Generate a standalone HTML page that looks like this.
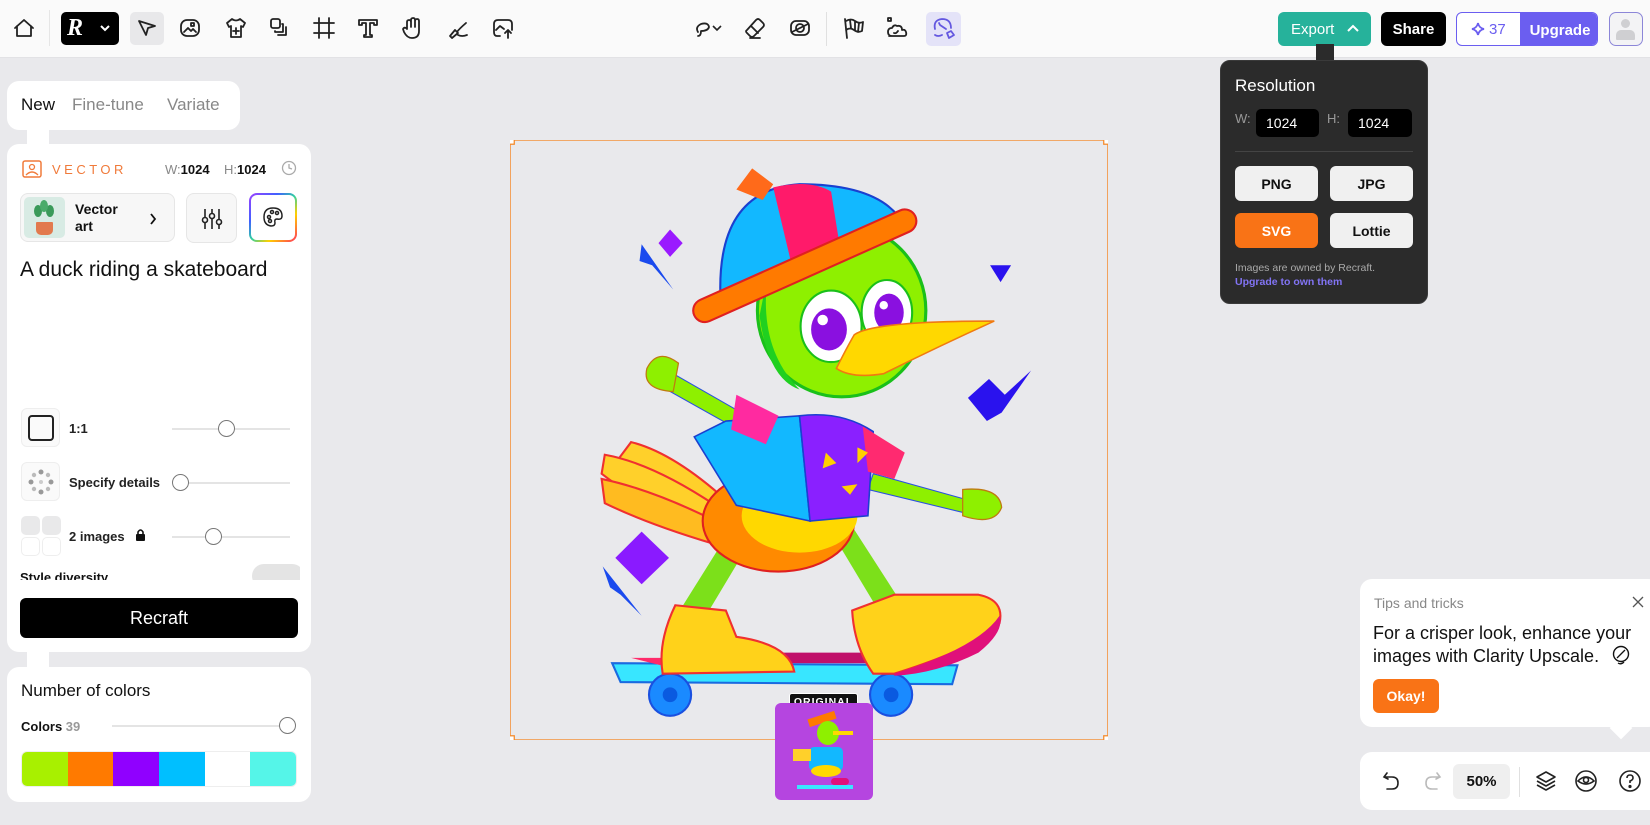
<!DOCTYPE html>
<html><head><meta charset="utf-8">
<style>
*{box-sizing:border-box;margin:0;padding:0}
body{width:1650px;height:825px;overflow:hidden;background:#e9e9ec;font-family:"Liberation Sans",sans-serif;position:relative;color:#111}
.abs{position:absolute}
#top{left:0;top:0;width:1650px;height:58px;background:#fafafa;border-bottom:1px solid #e2e2e5}
.ic{position:absolute;top:15px;width:26px;height:26px}
.ic svg{width:26px;height:26px;fill:none;stroke:#222;stroke-width:1.8;stroke-linecap:round;stroke-linejoin:round}
.panel{position:absolute;background:#fff;border-radius:12px}
.lbl{position:absolute;font-size:13px;font-weight:bold;color:#222}
.track{position:absolute;height:2px;background:#e4e4e4}
.knob{position:absolute;width:17px;height:17px;border-radius:50%;border:1.5px solid #777;background:#fff}
.btn{position:absolute;border-radius:6px;display:flex;align-items:center;justify-content:center;font-weight:bold}
</style></head><body>

<div id="top" class="abs">
  <div class="ic" style="left:11px"><svg viewBox="0 0 26 26"><path d="M4 13 L13 5 L22 13 M6 11 V21 H20 V11"/></svg></div>
  <div class="abs" style="left:49px;top:10px;width:1px;height:36px;background:#e6e6e6"></div>
  <div class="abs" style="left:61px;top:12px;width:58px;height:33px;background:#000;border-radius:5px">
    <span class="abs" style="left:6px;top:3px;color:#fff;font:italic bold 24px 'Liberation Serif',serif">R</span>
    <svg class="abs" style="left:38px;top:11px" width="12" height="10" viewBox="0 0 12 10"><path d="M2 3 L6 7 L10 3" stroke="#fff" stroke-width="2" fill="none"/></svg>
  </div>
  <div class="abs" style="left:130px;top:12px;width:34px;height:33px;background:#e8e8ea;border-radius:5px"></div>
  <div class="ic" style="left:134px"><svg viewBox="0 0 26 26"><path d="M5 6 L21 11 L14 13 L12 20 Z"/></svg></div>
  <div class="ic" style="left:177px"><svg viewBox="0 0 26 26"><rect x="4" y="5" width="18" height="16" rx="6"/><path d="M7 17 L11 13 L14 16 L16 14 L19 17"/><rect x="14" y="8" width="3" height="3"/></svg></div>
  <div class="ic" style="left:223px"><svg viewBox="0 0 26 26"><path d="M9 4 L4 8 L6 12 L8 11 V22 H18 V11 L20 12 L22 8 L17 4 Q13 7 9 4 Z M13 13 V19 M10 16 H16"/></svg></div>
  <div class="ic" style="left:267px"><svg viewBox="0 0 26 26"><rect x="4" y="4" width="9" height="9" rx="2"/><path d="M8 16 V17 H16 V9 H15 M11 20 H19 V12"/></svg></div>
  <div class="ic" style="left:311px"><svg viewBox="0 0 26 26"><path d="M8 3 V23 M18 3 V23 M3 8 H23 M3 18 H23"/></svg></div>
  <div class="ic" style="left:355px"><svg viewBox="0 0 26 26"><path d="M4 5 H22 V10 H19 V8 H15 V20 H17 V22 H9 V20 H11 V8 H7 V10 H4 Z"/></svg></div>
  <div class="ic" style="left:399px"><svg viewBox="0 0 26 26"><path d="M8 14 V7 Q8 5 10 5 Q12 5 12 7 V12 V5 Q12 3 14 3 Q16 3 16 5 V12 V6 Q16 4 18 4 Q20 4 20 6 V16 Q20 23 13 23 Q8 23 5 17 L4 14 Q5 12 7 13 Z"/></svg></div>
  <div class="ic" style="left:445px"><svg viewBox="0 0 26 26"><path d="M21 8 Q14 14 12 17 M5 21 L10 15 L13 18 L7 23 Z M13 20 Q17 22 22 20"/></svg></div>
  <div class="ic" style="left:490px"><svg viewBox="0 0 26 26"><path d="M10 21 H7 Q4 21 4 17 V9 Q4 5 8 5 H18 Q22 5 22 9 V15 M6 15 L10 11 L14 14 M18 23 V15 M15 18 L18 15 L21 18"/></svg></div>

  <div class="ic" style="left:692px"><svg viewBox="0 0 26 26"><path d="M6 17 Q3 12 9 9 Q16 7 17 12 Q16 16 9 16 M9 16 Q9 21 6 21"/></svg></div>
  <svg class="abs" style="left:712px;top:24px" width="10" height="8"><path d="M1 2 L5 6 L9 2" stroke="#222" stroke-width="1.6" fill="none"/></svg>
  <div class="ic" style="left:742px"><svg viewBox="0 0 26 26"><path d="M5 15 L14 5 Q16 3 18 5 L21 8 Q23 10 21 12 L12 21 Q10 23 8 21 L5 18 Q3 16 5 15 Z M9 11 L16 18 M8 23 H18"/></svg></div>
  <div class="ic" style="left:787px"><svg viewBox="0 0 26 26"><rect x="4" y="6" width="18" height="14" rx="5"/><circle cx="13" cy="13" r="4"/><path d="M5 17 L21 9"/></svg></div>
  <div class="abs" style="left:826px;top:12px;width:1px;height:34px;background:#e0e0e0"></div>
  <div class="ic" style="left:841px"><svg viewBox="0 0 26 26"><path d="M6 23 L4 4 M5 6 Q10 3 14 6 Q18 9 22 7 L21 16 Q17 18 13 15 Q9 12 5 15 M9 5 L10 13 M14 7 L14 15 M18 8 L17 17"/></svg></div>
  <div class="ic" style="left:883px"><svg viewBox="0 0 26 26"><rect x="5" y="3" width="3" height="3"/><path d="M6 21 H21 Q24 21 23 17 Q22 14 19 15 Q19 10 14 11 Q11 9 9 13 Q5 13 5 17 Q5 21 9 21 M11 18 Q13 19 15 16"/></svg></div>
  <div class="abs" style="left:926px;top:12px;width:35px;height:34px;background:#e4e3f8;border-radius:5px"></div>
  <div class="ic" style="left:930px"><svg viewBox="0 0 26 26" style="stroke:#6458e0"><path d="M5 14 Q3 5 12 4 Q21 4 21 13 M9 8 L10 10 M16 14 L10 10 M5 20 Q8 22 12 20 M17 18 L21 16 L24 20 L19 23 Z"/></svg></div>

  <div class="btn" style="left:1278px;top:12px;width:93px;height:34px;background:#26b29b;color:#fff;font-size:15px;font-weight:normal;justify-content:flex-start;padding-left:13px">Export
    <svg class="abs" style="left:69px;top:12px" width="12" height="9"><path d="M1 7 L6 2 L11 7" stroke="#fff" stroke-width="2" fill="none"/></svg></div>
  <div class="btn" style="left:1381px;top:12px;width:65px;height:34px;background:#000;color:#fff;font-size:15px">Share</div>
  <div class="abs" style="left:1456px;top:12px;width:142px;height:34px;border:1.5px solid #6b5ef0;border-radius:6px;background:#fff;overflow:hidden">
    <svg class="abs" style="left:14px;top:9px" width="14" height="14"><path d="M7 1 Q8 6 13 7 Q8 8 7 13 Q6 8 1 7 Q6 6 7 1 Z" stroke="#6b5ef0" stroke-width="1.8" fill="none"/></svg>
    <span class="abs" style="left:32px;top:8px;color:#6b5ef0;font-size:15px">37</span>
    <div class="abs" style="left:63px;top:0;width:80px;height:34px;background:#6b5ef0;color:#fff;font-size:15px;font-weight:bold;display:flex;align-items:center;justify-content:center">Upgrade</div>
  </div>
  <div class="abs" style="left:1609px;top:12px;width:34px;height:34px;border:1.5px solid #8c86d8;border-radius:7px;background:#f3f3f5">
    <div class="abs" style="left:11px;top:6px;width:9px;height:9px;border-radius:50%;background:#cfcfd2"></div>
    <div class="abs" style="left:6px;top:17px;width:19px;height:10px;border-radius:5px 5px 1px 1px;background:#cfcfd2"></div>
  </div>
</div>

<!-- Export dropdown -->
<div class="abs" style="left:1316px;top:44px;width:18px;height:18px;background:#2b2b2b"></div>
<div class="abs" style="left:1220px;top:60px;width:208px;height:244px;background:#2b2b2b;border-radius:10px;border:1px solid #3a3a3a">
  <div class="abs" style="left:14px;top:15px;color:#fff;font-size:17px">Resolution</div>
  <div class="abs" style="left:14px;top:50px;color:#999;font-size:13px">W:</div>
  <div class="abs" style="left:35px;top:48px;width:63px;height:28px;background:#000;border-radius:5px;color:#fff;font-size:14px;padding:6px 0 0 10px">1024</div>
  <div class="abs" style="left:106px;top:50px;color:#999;font-size:13px">H:</div>
  <div class="abs" style="left:127px;top:48px;width:64px;height:28px;background:#000;border-radius:5px;color:#fff;font-size:14px;padding:6px 0 0 10px">1024</div>
  <div class="abs" style="left:14px;top:90px;width:178px;height:1px;background:#444"></div>
  <div class="btn" style="left:14px;top:105px;width:83px;height:35px;background:#f0f0f0;font-size:14px">PNG</div>
  <div class="btn" style="left:109px;top:105px;width:83px;height:35px;background:#f0f0f0;font-size:14px">JPG</div>
  <div class="btn" style="left:14px;top:152px;width:83px;height:35px;background:#f97316;color:#fff;font-size:14px">SVG</div>
  <div class="btn" style="left:109px;top:152px;width:83px;height:35px;background:#f0f0f0;font-size:14px">Lottie</div>
  <div class="abs" style="left:14px;top:201px;color:#aaa;font-size:10.5px">Images are owned by Recraft.</div>
  <div class="abs" style="left:14px;top:215px;color:#8274f5;font-size:10.5px;font-weight:bold">Upgrade to own them</div>
</div>

<!-- Left panels -->
<div class="panel" style="left:7px;top:81px;width:233px;height:49px"></div>
<div class="abs" style="left:27px;top:128px;width:22px;height:18px;background:#fff"></div>
<div class="abs" style="left:21px;top:95px;font-size:17px;color:#111">New</div>
<div class="abs" style="left:72px;top:95px;font-size:17px;color:#888">Fine-tune</div>
<div class="abs" style="left:167px;top:95px;font-size:17px;color:#888">Variate</div>

<div class="panel" style="left:7px;top:144px;width:304px;height:508px;overflow:hidden">
  <svg class="abs" style="left:14px;top:15px" width="22" height="20" viewBox="0 0 22 20"><rect x="2" y="2" width="18" height="16" rx="2" stroke="#f07a3a" stroke-width="1.5" fill="none"/><circle cx="11" cy="8" r="2.5" stroke="#f07a3a" stroke-width="1.3" fill="none"/><path d="M5 16 Q11 10 17 16" stroke="#f07a3a" stroke-width="1.3" fill="none"/></svg>
  <div class="abs" style="left:45px;top:18px;color:#f07a3a;font-size:13px;letter-spacing:3.5px">VECTOR</div>
  <div class="abs" style="left:158px;top:18px;font-size:13px;color:#888">W:<b style="color:#111">1024</b></div>
  <div class="abs" style="left:217px;top:18px;font-size:13px;color:#888">H:<b style="color:#111">1024</b></div>
  <svg class="abs" style="left:274px;top:16px" width="16" height="16"><circle cx="8" cy="8" r="6.5" stroke="#aaa" stroke-width="1.3" fill="none"/><path d="M8 4 V8 L11 9" stroke="#aaa" stroke-width="1.3" fill="none"/></svg>
  <div class="abs" style="left:13px;top:49px;width:155px;height:49px;border:1px solid #e6e6e6;border-radius:8px;background:#f7f7f7">
    <div class="abs" style="left:3px;top:3px;width:41px;height:41px;background:#d8ebe4;border-radius:5px">
      <div class="abs" style="left:12px;top:25px;width:17px;height:13px;background:#e27a4e;border-radius:1px 1px 5px 5px"></div>
      <div class="abs" style="left:10px;top:8px;width:8px;height:12px;background:#3a9a5a;border-radius:50%"></div>
      <div class="abs" style="left:22px;top:8px;width:8px;height:12px;background:#3a9a5a;border-radius:50%"></div>
      <div class="abs" style="left:16px;top:3px;width:8px;height:12px;background:#4aab6a;border-radius:50%"></div>
    </div>
    <div class="abs" style="left:54px;top:7px;font-size:14px;font-weight:bold;line-height:17px">Vector<br>art</div>
    <svg class="abs" style="left:128px;top:19px" width="8" height="12"><path d="M2 1 L6 6 L2 11" stroke="#111" stroke-width="1.8" fill="none"/></svg>
  </div>
  <div class="abs" style="left:179px;top:49px;width:51px;height:50px;border:1px solid #e6e6e6;border-radius:8px;background:#f7f7f7">
    <svg class="abs" style="left:14px;top:13px" width="22" height="24" viewBox="0 0 22 24" fill="none" stroke="#222" stroke-width="1.6"><path d="M4 2 V10 M4 16 V22 M11 2 V6 M11 12 V22 M18 2 V12 M18 18 V22"/><circle cx="4" cy="13" r="2.5"/><circle cx="11" cy="9" r="2.5"/><circle cx="18" cy="15" r="2.5"/></svg>
  </div>
  <div class="abs" style="left:242px;top:49px;width:48px;height:49px;border-radius:8px;padding:2px;background:linear-gradient(135deg,#a040ff,#4060ff 30%,#30d0a0 50%,#ffd000 70%,#ff3060)">
    <div style="width:100%;height:100%;background:#fff;border-radius:6px;position:relative">
      <svg class="abs" style="left:11px;top:11px" width="22" height="22" viewBox="0 0 22 22" fill="none" stroke="#222" stroke-width="1.5"><path d="M11 2 Q20 2 20 10 Q20 14 15 13 Q12 13 13 17 Q13 20 9 20 Q2 19 2 11 Q2 2 11 2 Z"/><circle cx="7" cy="11" r="1.5"/><circle cx="10" cy="6" r="1.5"/><circle cx="15" cy="7" r="1.5"/><circle cx="8" cy="15" r="1.5"/></svg>
    </div>
  </div>
  <div class="abs" style="left:13px;top:114px;font-size:21px;color:#111">A duck riding a skateboard</div>

  <div class="abs" style="left:14px;top:264px;width:39px;height:39px;border:1px solid #eee;border-radius:6px;background:#fafafa">
    <div class="abs" style="left:6px;top:6px;width:26px;height:26px;border:2px solid #222;border-radius:4px"></div>
  </div>
  <div class="lbl" style="left:62px;top:277px">1:1</div>
  <div class="track" style="left:165px;top:284px;width:118px"></div>
  <div class="knob" style="left:211px;top:276px"></div>

  <div class="abs" style="left:14px;top:318px;width:39px;height:39px;border:1px solid #eee;border-radius:6px;background:#fafafa">
    <svg class="abs" style="left:5px;top:5px" width="28" height="28" viewBox="0 0 28 28" fill="#999"><circle cx="14" cy="4" r="2.5"/><circle cx="14" cy="24" r="2.5"/><circle cx="4" cy="14" r="2.5"/><circle cx="24" cy="14" r="2.5"/><circle cx="7" cy="7" r="2.2" fill="#bbb"/><circle cx="21" cy="7" r="2.2" fill="#bbb"/><circle cx="7" cy="21" r="2.2" fill="#bbb"/><circle cx="21" cy="21" r="2.2" fill="#bbb"/><circle cx="14" cy="14" r="2" fill="#ccc"/></svg>
  </div>
  <div class="lbl" style="left:62px;top:331px">Specify details</div>
  <div class="track" style="left:175px;top:338px;width:108px"></div>
  <div class="knob" style="left:165px;top:330px"></div>

  <div class="abs" style="left:14px;top:372px;width:19px;height:19px;background:#e9e9ea;border-radius:5px"></div>
  <div class="abs" style="left:35px;top:372px;width:19px;height:19px;background:#e9e9ea;border-radius:5px"></div>
  <div class="abs" style="left:14px;top:393px;width:19px;height:19px;border:1px solid #eee;border-radius:5px"></div>
  <div class="abs" style="left:35px;top:393px;width:19px;height:19px;border:1px solid #eee;border-radius:5px"></div>
  <div class="lbl" style="left:62px;top:385px">2 images</div>
  <svg class="abs" style="left:128px;top:384px" width="11" height="14"><rect x="1" y="6" width="9" height="7" rx="1" fill="#111"/><path d="M3 6 V4 Q5.5 0 8 4 V6" stroke="#111" stroke-width="1.6" fill="none"/></svg>
  <div class="track" style="left:165px;top:392px;width:118px"></div>
  <div class="knob" style="left:198px;top:384px"></div>

  <div class="abs" style="left:13px;top:402px;width:280px;height:34px;overflow:hidden"><div class="abs" style="left:0;top:24px;font-size:13px;font-weight:bold">Style diversity</div>
   <div class="abs" style="left:232px;top:18px;width:52px;height:24px;border-radius:12px;background:#e4e4e4"></div></div>
  <div class="abs" style="left:0;top:436px;width:304px;height:10px;background:#fff"></div>
  <div class="btn" style="left:13px;top:454px;width:278px;height:40px;background:#000;color:#fff;font-size:18px;font-weight:normal">Recraft</div>
</div>
<div class="abs" style="left:27px;top:650px;width:22px;height:18px;background:#fff"></div>
<div class="panel" style="left:7px;top:667px;width:304px;height:135px">
  <div class="abs" style="left:14px;top:14px;font-size:17px">Number of colors</div>
  <div class="abs" style="left:14px;top:52px;font-size:13px;font-weight:bold">Colors <span style="color:#999">39</span></div>
  <div class="track" style="left:105px;top:58px;width:180px"></div>
  <div class="knob" style="left:272px;top:50px"></div>
  <div class="abs" style="left:14px;top:84px;width:276px;height:36px;border-radius:6px;overflow:hidden;display:flex;border:1px solid #eee">
    <div style="flex:1;background:#a8f000"></div><div style="flex:1;background:#ff7a00"></div><div style="flex:1;background:#9000ff"></div><div style="flex:1;background:#00bfff"></div><div style="flex:1;background:#fff"></div><div style="flex:1;background:#55f5e8"></div>
  </div>
</div>

<!-- Canvas -->
<svg class="abs" style="left:510px;top:140px" width="598" height="600" viewBox="485 133 568 570">
  <rect x="485" y="133" width="568" height="570" fill="none" stroke="#f58a2a" stroke-width="1.3"/>
  <g fill="#fff" stroke="#f58a2a" stroke-width="1.2"><rect x="481" y="129" width="8" height="8"/><rect x="1049" y="129" width="8" height="8"/><rect x="481" y="699" width="8" height="8"/><rect x="1049" y="699" width="8" height="8"/></g>
  <path d="M637 218 L649 231 L637 244 L626 231 Z" fill="#9a1aff"/>
  <path d="M610 232 L640 275 L620 252 L608 248 Z" fill="#1a4aee"/>
  <path d="M941 252 L961 252 L951 268 Z" fill="#2a12ee"/>
  <path d="M920 378 L940 360 L955 375 L980 352 L952 392 L938 400 Z" fill="#2a12ee"/>
  <path d="M610 505 L636 530 L610 555 L585 530 Z" fill="#8a1aff"/>
  <path d="M573 538 L610 585 L590 565 L580 558 Z" fill="#1a4aee"/>
  <g stroke="#f03030" stroke-width="2" fill="#ffd02a">
    <path d="M600 420 Q640 430 690 475 L680 500 Q620 470 585 440 Z"/>
    <path d="M575 432 Q620 440 680 480 L675 505 Q610 480 572 450 Z"/>
    <path d="M572 455 Q620 465 680 495 L690 520 Q620 500 575 478 Z" fill="#ffbb20"/>
  </g>
  <path d="M690 510 L640 590 L665 595 L710 520 Z" fill="#7ce01a"/>
  <path d="M790 505 L835 580 L855 570 L810 500 Z" fill="#7ce01a"/>
  <path d="M710 395 L640 355 L630 368 L705 410 Z" fill="#8ef000" stroke="#2a50e0" stroke-width="1"/>
  <path d="M645 345 Q625 330 615 350 Q610 370 640 372 Z" fill="#8ef000" stroke="#c07a10" stroke-width="1.2"/>
  <path d="M830 450 L920 475 L920 488 L825 465 Z" fill="#8ef000" stroke="#2a50e0" stroke-width="1"/>
  <path d="M915 465 Q950 462 952 482 Q945 500 915 490 Z" fill="#8ef000" stroke="#c07a10" stroke-width="1.2"/>
  <ellipse cx="740" cy="495" rx="72" ry="48" fill="#ff8a00" stroke="#e02020" stroke-width="2"/>
  <ellipse cx="760" cy="490" rx="55" ry="35" fill="#ffd800"/>
  <path d="M690 400 L760 395 L770 495 L700 480 L660 415 Z" fill="#12b8ff" stroke="#1a40d0" stroke-width="1.5"/>
  <path d="M760 395 Q800 390 830 410 L825 490 L770 495 Z" fill="#8a20ff" stroke="#1a40d0" stroke-width="1.5"/>
  <path d="M820 405 L860 430 L850 455 L825 448 Z" fill="#ff2a70"/>
  <path d="M700 375 L740 395 L728 422 L695 408 Z" fill="#ff2aa0"/>
  <path d="M785 430 L795 440 L782 445 Z M800 462 L815 460 L808 470 Z M815 425 L825 430 L815 440 Z" fill="#ffd000"/>
  <ellipse cx="800" cy="295" rx="80" ry="82" fill="#8ef000" stroke="#1ac01a" stroke-width="3"/>
  <path d="M730 260 Q720 330 760 370 Q730 360 722 300 Z" fill="#20d020"/>
  <path d="M685 285 Q680 180 760 175 Q840 175 860 215 Z" fill="#12b8ff" stroke="#1a40d0" stroke-width="2"/>
  <path d="M735 178 Q770 170 790 182 L800 245 L755 262 Z" fill="#ff1a6a"/>
  <path d="M700 180 L715 160 L735 175 L725 190 Z" fill="#ff6a1a"/>
  <path d="M670 295 L860 210" stroke="#e02020" stroke-width="24" stroke-linecap="round"/>
  <path d="M670 295 L860 210" stroke="#ff7a00" stroke-width="20" stroke-linecap="round"/>
  <ellipse cx="790" cy="310" rx="29" ry="34" fill="#fff" stroke="#1ac01a" stroke-width="2"/>
  <ellipse cx="843" cy="297" rx="24" ry="31" fill="#fff" stroke="#1ac01a" stroke-width="2"/>
  <ellipse cx="788" cy="313" rx="17" ry="20" fill="#8a10e0"/>
  <ellipse cx="845" cy="297" rx="14" ry="18" fill="#8a10e0"/>
  <circle cx="782" cy="304" r="5" fill="#fff"/><circle cx="840" cy="290" r="4" fill="#fff"/>
  <path d="M812 318 Q830 305 945 305 Q890 330 840 355 Q810 360 795 350 Q805 330 812 318 Z" fill="#ffd800" stroke="#f07a10" stroke-width="1.5"/>
  <path d="M582 630 L910 632 L905 650 L590 648 Z" fill="#38e6ff" stroke="#1a6ae0" stroke-width="2"/>
  <path d="M600 625 L630 625 L628 632 Z" fill="#ff2a6a"/>
  <rect x="720" y="620" width="130" height="10" fill="#c0106a"/>
  <circle cx="637" cy="660" r="20" fill="#1a8aff" stroke="#1a50e0" stroke-width="2"/><circle cx="637" cy="660" r="7" fill="#0a5ae0"/>
  <circle cx="847" cy="660" r="20" fill="#1a8aff" stroke="#1a50e0" stroke-width="2"/><circle cx="847" cy="660" r="7" fill="#0a5ae0"/>
  <path d="M642 575 L690 580 L700 605 Q750 612 755 638 L630 640 Q625 610 642 575 Z" fill="#ffd21a" stroke="#f03030" stroke-width="2"/>
  <path d="M810 580 L850 565 Q890 565 930 565 Q955 570 950 592 Q930 615 850 640 L830 640 Q812 615 810 580 Z" fill="#ffd21a" stroke="#f03030" stroke-width="2"/>
  <path d="M850 640 Q930 615 950 585 Q955 600 930 620 Q890 640 850 642 Z" fill="#e0107a"/>
</svg>

<div class="abs" style="left:789px;top:693px;width:69px;height:17px;background:#111;border-radius:3px;color:#fff;font-size:10.5px;font-weight:bold;letter-spacing:1px;text-align:center;line-height:17px;border:1px solid #fff">ORIGINAL</div>
<div class="abs" style="left:775px;top:703px;width:98px;height:97px;background:#b545e0;border-radius:6px;overflow:hidden">
  <div class="abs" style="left:33px;top:12px;width:28px;height:8px;background:#ff7a00;transform:rotate(-18deg)"></div>
  <div class="abs" style="left:42px;top:18px;width:22px;height:24px;border-radius:50%;background:#8ef000"></div>
  <div class="abs" style="left:58px;top:28px;width:20px;height:4px;background:#ffd800"></div>
  <div class="abs" style="left:34px;top:44px;width:34px;height:24px;background:#12b8ff;border-radius:5px"></div>
  <div class="abs" style="left:18px;top:46px;width:18px;height:12px;background:#ffd02a"></div>
  <div class="abs" style="left:36px;top:62px;width:30px;height:12px;background:#ffd800;border-radius:50%"></div>
  <div class="abs" style="left:22px;top:82px;width:56px;height:4px;background:#38e6ff"></div>
  <div class="abs" style="left:56px;top:75px;width:18px;height:7px;background:#e0107a;border-radius:4px"></div>
</div>

<div class="panel" style="left:1360px;top:579px;width:300px;height:148px"></div>
<div class="abs" style="left:1613px;top:720px;width:16px;height:16px;background:#fff;transform:rotate(45deg)"></div>
<div class="abs" style="left:1374px;top:595px;font-size:14px;color:#888">Tips and tricks</div>
<svg class="abs" style="left:1632px;top:596px" width="12" height="12"><path d="M1 1 L11 11 M11 1 L1 11" stroke="#555" stroke-width="1.3"/></svg>
<div class="abs" style="left:1373px;top:622px;font-size:18px;line-height:23px;color:#111">For a crisper look, enhance your<br>images with Clarity Upscale.</div>
<svg class="abs" style="left:1612px;top:645px" width="18" height="22"><circle cx="9" cy="9" r="7.5" stroke="#111" stroke-width="1.4" fill="none"/><path d="M5 13 L13 5 M6 18 Q9 20 12 17" stroke="#111" stroke-width="1.3" fill="none"/></svg>
<div class="btn" style="left:1373px;top:679px;width:66px;height:34px;background:#f97316;color:#fff;font-size:14px">Okay!</div>

<div class="panel" style="left:1360px;top:752px;width:300px;height:58px;border-radius:12px 0 0 12px"></div>
<svg class="abs" style="left:1380px;top:770px" width="22" height="22" viewBox="0 0 22 22" fill="none" stroke="#222" stroke-width="1.6" stroke-linecap="round"><path d="M7 3 L4 7 L8 9 M4 7 H12 Q18 7 18 13 Q18 19 12 19 H7"/></svg>
<svg class="abs" style="left:1422px;top:770px" width="22" height="22" viewBox="0 0 22 22" fill="none" stroke="#bbb" stroke-width="1.6" stroke-linecap="round"><path d="M15 3 L18 7 L14 9 M18 7 H10 Q4 7 4 13 Q4 19 10 19 H15"/></svg>
<div class="btn" style="left:1453px;top:764px;width:57px;height:35px;background:#efefef;font-size:15px">50%</div>
<div class="abs" style="left:1519px;top:767px;width:1px;height:30px;background:#e0e0e0"></div>
<svg class="abs" style="left:1534px;top:769px" width="24" height="24" viewBox="0 0 24 24" fill="none" stroke="#222" stroke-width="1.6" stroke-linejoin="round"><path d="M12 3 L21 8 L12 13 L3 8 Z M3 12 L12 17 L21 12 M3 16 L12 21 L21 16"/></svg>
<svg class="abs" style="left:1574px;top:769px" width="24" height="24" viewBox="0 0 24 24" fill="none" stroke="#222" stroke-width="1.6"><circle cx="12" cy="12" r="10"/><path d="M4 12 Q12 4 20 12 Q12 18 4 12 Z"/><circle cx="12" cy="11" r="2.5"/></svg>
<svg class="abs" style="left:1618px;top:769px" width="24" height="24" viewBox="0 0 24 24" fill="none" stroke="#222" stroke-width="1.6"><circle cx="12" cy="12" r="10"/><path d="M9 9 Q9 6 12 6 Q15 6 15 9 Q15 11 12 12 V14"/><circle cx="12" cy="17.5" r="0.8" fill="#222"/></svg>
</body></html>
